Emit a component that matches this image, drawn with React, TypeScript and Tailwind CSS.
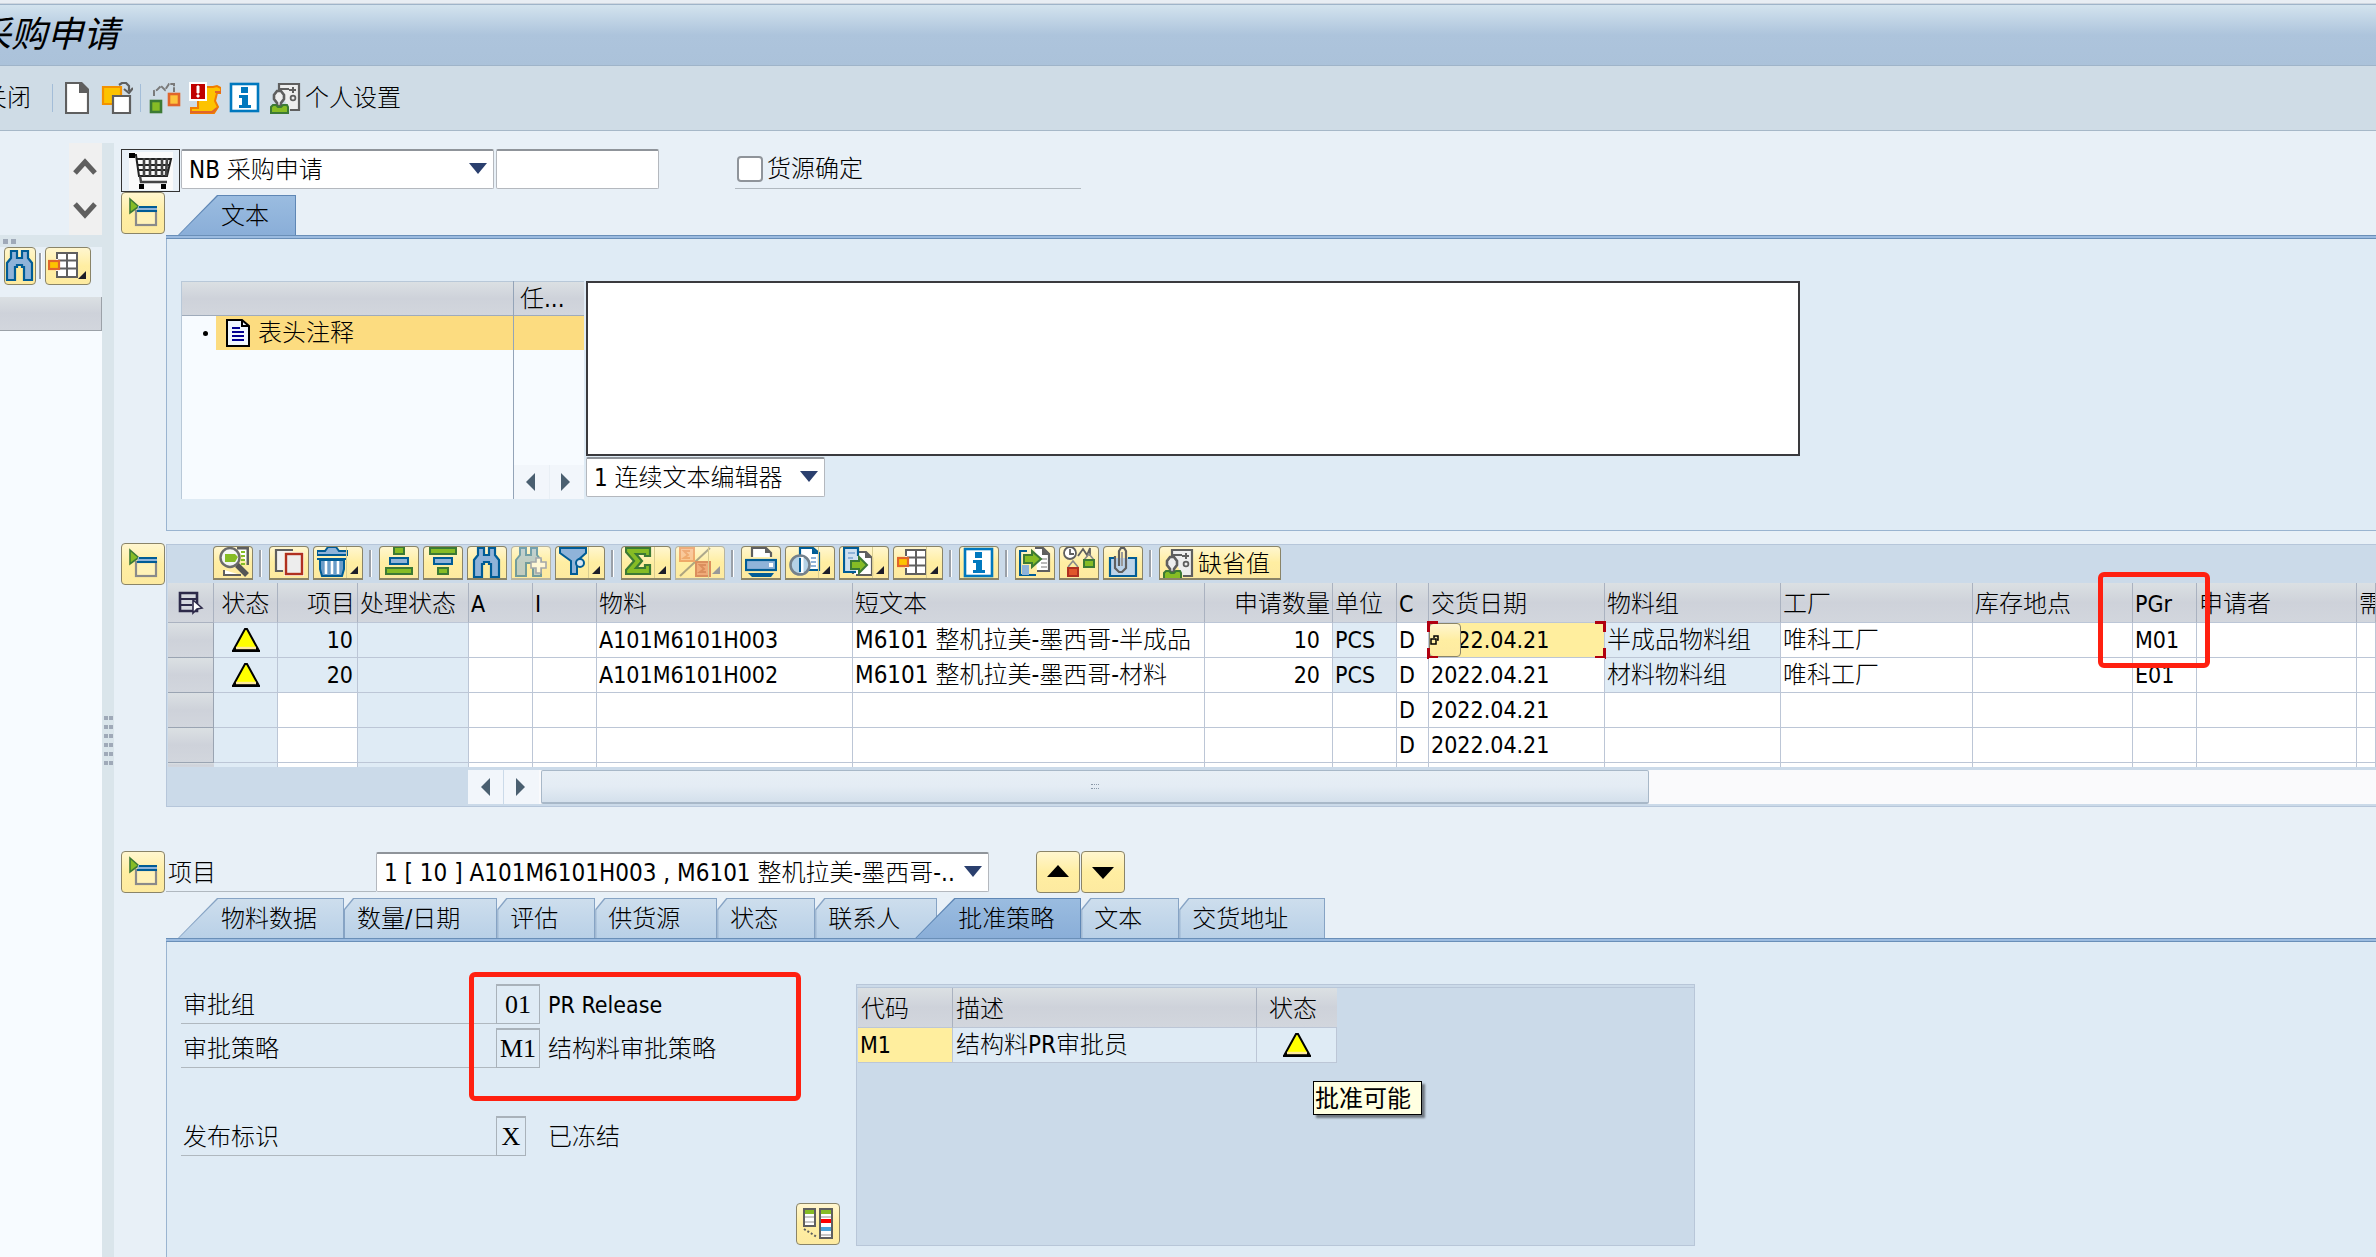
import type { ReactNode, SVGProps } from "react";
import clsx from "clsx";

const GRAY = "#5f5f5f";
const BLUE = "#005c96";
const SKY = "#8fb3d9";
const GREEN = "#86bc25";
const DARK_GREEN = "#3c7a34";

const Icon = ({ children, ...props }: SVGProps<SVGSVGElement>) => (
  <svg width="32" height="32" viewBox="0 0 32 32" fill="none" className="block shrink-0" aria-hidden="true" {...props}>
    {children}
  </svg>
);

const InfoIcon = () => (
  <Icon>
    <rect x="2" y="2" width="27" height="27" fill="#fff" stroke="#0078be" strokeWidth="2.6" />
    <path d="M12 5h7v6h-7zM10 13h9v10h3v3H10v-3h3v-7h-3z" fill="#0078be" />
  </Icon>
);

const PersonIcon = () => (
  <Icon>
    <path d="M10 8V2h20v26h-9" fill="#eee" stroke={GRAY} strokeWidth="2.2" />
    <path d="M11 7h9M20 8h7M24 5v6" stroke={GRAY} strokeWidth="2" />
    <circle cx="24" cy="16" r="2.4" stroke={GRAY} strokeWidth="1.8" />
    <path d="M8 9h4l3 4v4l-3 4v3H8v-3l-3-4v-4z" fill="#eee" stroke={GRAY} strokeWidth="2.6" />
    <path d="M2 31v-6l2-2h3l2 2h3l2-2h4l1 2v6z" fill={GREEN} stroke={DARK_GREEN} strokeWidth="2" />
  </Icon>
);

const BinocularsIcon = () => (
  <Icon>
    <path
      d="M7 1h6v7h5V1h6v7l4 5v17h-8V17h-2v-2h-5v2h-2v13H3V13l4-5z"
      fill={SKY}
      stroke={BLUE}
      strokeWidth="2.2"
    />
  </Icon>
);

const BinocularsPlusIcon = () => (
  <Icon opacity="0.55">
    <path d="M5 1h6v7h5V1h6v7l4 5v16h-8V16h-7v13H1V13l4-5z" fill={SKY} stroke={BLUE} strokeWidth="2" />
    <path d="M21 11h5v4h5v6h-5v5h-5v-5h-5v-6h5z" fill="#fff" stroke="#5a6fae" strokeWidth="1.6" />
  </Icon>
);

const LayoutIcon = () => (
  <Icon>
    <path d="M8 2h21v25H8z" fill="#fff" />
    <path d="M8 3h22M10 10.500h20M10 18.500h20M8 27h22M9 2v7M9 21v7M19 2v26M29 2v26" stroke={GRAY} strokeWidth="2" />
    <rect x="1" y="11" width="10" height="8" fill="#fdc300" stroke="#e0652b" strokeWidth="2.2" />
  </Icon>
);

const DetailIcon = () => (
  <Icon>
    <path d="M20 1h11v17" fill="#fff" stroke={GRAY} strokeWidth="3" />
    <path d="M24 5h4M24 9h4M24 13h4M24 17h4" stroke={GREEN} strokeWidth="2" />
    <path d="M7 23v5h17" stroke={GRAY} strokeWidth="2" fill="#fff" />
    <circle cx="13" cy="10.500" r="9.500" fill="#f4f6f4" stroke="#6b6b6b" strokeWidth="2.4" />
    <path d="M8 7h10l3 3-3 5H8z" fill={GREEN} />
    <path d="M20 18l10 10" stroke="#555" strokeWidth="5.500" />
  </Icon>
);

const CopyIcon = () => (
  <Icon>
    <path d="M20 3H3v21h7" fill="#f2f2f2" stroke={GRAY} strokeWidth="2.2" />
    <rect x="11" y="5" width="20" height="24" fill="#fff8e4" />
    <rect x="13" y="7" width="16" height="20" fill="#ededed" stroke="#b03020" strokeWidth="2.4" />
  </Icon>
);

const TrashIcon = () => (
  <Icon>
    <path d="M0 8V4h8l3-4h8l3 4h8v4z" fill={SKY} stroke={BLUE} strokeWidth="2" />
    <path d="M3 13h24v9l-2 7H5l-2-7z" fill="#6a9cc8" stroke={BLUE} strokeWidth="2" />
    <path d="M9 14v13M15 14v13M21 14v13" stroke="#fff" strokeWidth="2.600" />
    <path d="M0 12h30" stroke={BLUE} strokeWidth="2" />
  </Icon>
);

const SortAscIcon = () => (
  <Icon strokeWidth="2">
    <rect x="11" y="0" width="10" height="7" fill={GREEN} stroke={DARK_GREEN} />
    <rect x="7" y="11" width="18" height="6" fill={SKY} stroke={BLUE} />
    <rect x="3" y="21" width="26" height="6" fill={GREEN} stroke={DARK_GREEN} />
  </Icon>
);

const SortDescIcon = () => (
  <Icon strokeWidth="2">
    <rect x="3" y="1" width="26" height="6" fill={GREEN} stroke={DARK_GREEN} />
    <rect x="7" y="11" width="18" height="6" fill={SKY} stroke={BLUE} />
    <rect x="11" y="21" width="10" height="6" fill={GREEN} stroke={DARK_GREEN} />
  </Icon>
);

const FilterIcon = () => (
  <Icon>
    <path d="M1 1h26v5l-9 8v13h-6V14L1 6z" fill={SKY} stroke={BLUE} strokeWidth="2" />
    <circle cx="21" cy="16" r="4" fill="#d8e6f2" stroke={BLUE} strokeWidth="2" />
  </Icon>
);

const SumIcon = () => (
  <Icon>
    <path d="M1 1h24v8h-5V7h-9l6 7-6 7h9v-3h5v9H1v-4l8-9-8-9z" fill={GREEN} stroke={DARK_GREEN} strokeWidth="2.2" />
  </Icon>
);

const SubtotalIcon = () => (
  <Icon opacity="0.5">
    <path d="M1 29L31 1" stroke={GRAY} strokeWidth="2" />
    <rect x="1" y="1" width="14" height="13" fill="#f4a07a" stroke="#e0652b" strokeWidth="2" />
    <path d="M11 4H5l4 4-4 3h6" stroke="#e0652b" strokeWidth="2" />
    <rect x="17" y="15" width="14" height="14" fill="#e06a50" stroke="#b8321a" strokeWidth="2" />
    <path d="M27 18h-6l4 4-4 3h6" stroke="#b8321a" strokeWidth="2" />
  </Icon>
);

const PrintIcon = () => (
  <Icon>
    <path d="M7 10V1h14l5 5v4" fill="#fff" stroke={GRAY} strokeWidth="2.2" />
    <path d="M20 1v5h6z" fill={GRAY} />
    <rect x="1" y="13" width="30" height="10" fill={SKY} stroke={BLUE} strokeWidth="2.2" />
    <rect x="24" y="16" width="4" height="4" fill="#fff" />
    <path d="M3 26h26l-3 4H7z" fill={BLUE} />
  </Icon>
);

const PreviewIcon = () => (
  <Icon>
    <path d="M11 8V1h13l6 5v17H18" fill="#fff" stroke={BLUE} strokeWidth="2.2" />
    <path d="M23 1v6h7z" fill={BLUE} />
    <path d="M22 11h5M22 15h5M22 19h5" stroke={SKY} strokeWidth="2" />
    <circle cx="11" cy="18" r="9.500" fill="#b5d2e6" stroke="#74818c" strokeWidth="2.6" />
    <path d="M13 10v16" stroke="#fff" strokeWidth="3" />
    <path d="M11 11v14" stroke={BLUE} strokeWidth="2" />
  </Icon>
);

const ExportIcon = () => (
  <Icon>
    <path d="M10 27V5h13l6 6v17H13" fill="#fff" stroke={GRAY} strokeWidth="2.2" />
    <path d="M22 5v6h7z" fill={GRAY} />
    <path d="M13 25H1V1h14v8" fill="#cfe0f0" stroke={BLUE} strokeWidth="2.2" />
    <path d="M5 6h7M5 11h5" stroke={SKY} strokeWidth="2" />
    <path d="M8 14h8v-4l8 8-8 8v-4H8z" fill={GREEN} stroke={DARK_GREEN} strokeWidth="2" />
  </Icon>
);

const ImportIcon = () => (
  <Icon>
    <path d="M16 1h8l6 6v17H18" fill="#fff" stroke={GRAY} strokeWidth="2.2" />
    <path d="M23 1v7h7z" fill={GRAY} />
    <path d="M22 12h6M22 16h6M22 20h6" stroke="#b9b9b9" strokeWidth="2" />
    <path d="M8 4H1v24h16" stroke={BLUE} strokeWidth="2.2" />
    <path d="M3 18h7v10H3z" fill={SKY} />
    <path d="M5 8h8V4l9 8-9 8v-4H5z" fill={GREEN} stroke={DARK_GREEN} strokeWidth="2" />
  </Icon>
);

const ScheduleIcon = () => (
  <Icon>
    <circle cx="7" cy="6" r="6" fill="#fff" stroke={GRAY} strokeWidth="1.8" />
    <path d="M7 2v5h4M15 9l5-7 4 6 3-7v8" stroke={GRAY} strokeWidth="1.8" />
    <path d="M5 20l5-6 5 6M21 13l5-6 5 6" stroke="#8a8a8a" strokeWidth="1.6" />
    <rect x="21" y="13" width="10" height="7" fill={GREEN} stroke={DARK_GREEN} strokeWidth="2" />
    <rect x="5" y="21" width="10" height="8" fill="#e0562b" stroke="#b03020" strokeWidth="2" />
  </Icon>
);

const AttachmentIcon = () => (
  <Icon>
    <path d="M7 11H3v18h26V11h-8" fill="#bcd4ea" stroke={BLUE} strokeWidth="2.2" />
    <path d="M8 9v12l4 4h3l4-4V4l-2-3h-3l-2 3v15" stroke={GRAY} strokeWidth="2.2" />
    <path d="M15 5v14" stroke="#9a9a9a" strokeWidth="2" />
  </Icon>
);

const DocIcon = () => (
  <svg width="24" height="32" viewBox="0 0 24 32" className="block" aria-hidden="true">
    <path d="M1 1h14l8 8v22H1z" fill="#fff" stroke={GRAY} strokeWidth="2.200" />
    <path d="M14 0h3l7 7v4H14z" fill={GRAY} />
  </svg>
);

const OtherDocIcon = () => (
  <Icon>
    <path d="M2 5h18v17H2z" fill="#fdc300" stroke="#f39200" strokeWidth="2.200" />
    <path d="M18 3l3-2h4l3 3v5M23 7l5 4 4-5" stroke={GRAY} strokeWidth="2.200" />
    <path d="M12 14h17v17H12z" fill="#fff" stroke={GRAY} strokeWidth="2.200" />
  </Icon>
);

const HierarchyIcon = () => (
  <Icon>
    <path d="M5 14V9l3-1 4-4 4 4 4-6h5v8" stroke="#7a7a7a" strokeWidth="2" strokeDasharray="6 1" />
    <rect x="2" y="19" width="10" height="11" fill={GREEN} stroke={DARK_GREEN} strokeWidth="2.600" />
    <rect x="20" y="12" width="10" height="11" fill="#fdc33c" stroke="#e0652b" strokeWidth="2.600" />
  </Icon>
);

const MessagesIcon = () => (
  <Icon>
    <path
      d="M9 25V5h15l4-1 4 2v5h-4l-2 8 3 6-4 6H2v-5h7z"
      fill="#fdc300"
      stroke="#f07d00"
      strokeWidth="2"
    />
    <path d="M1 30h22l5-4M26 10h6" stroke="#e0652b" strokeWidth="2" />
    <path d="M0 0h18v19H0z" fill="#fff" />
    <path d="M2 2h14v15H2z" fill="#c00000" />
    <path d="M8 4h2v7H8zM8 13h2v2H8z" fill="#fff" stroke="#fff" />
  </Icon>
);

const CartIcon = () => (
  <svg width="46" height="38" viewBox="0 0 46 38" fill="none" aria-hidden="true">
    <path d="M1 0h44v38H1z" fill="#fafafa" />
    <path d="M1 3h7l3 21h28l4-17H9M9 13h33M10 18h31" stroke="#222" strokeWidth="2" />
    <path d="M16 6v18M22 6v18M28 6v18M34 6v18M39 6l-1 18" stroke="#444" strokeWidth="2.600" />
    <path d="M12 24l1 6h26" stroke="#444" strokeWidth="2.400" />
    <path d="M1 1h6v5H1zM11 32h5v5h-5zM33 32h5v5h-5z" fill="#000" />
  </svg>
);

const ExpandIcon = () => (
  <svg width="30" height="32" viewBox="0 0 30 32" fill="none" aria-hidden="true">
    <path d="M2 2l8 7v1l-8 6z" fill={GREEN} stroke={DARK_GREEN} strokeWidth="1.600" />
    <rect x="8" y="14" width="20" height="14" fill="#fff2b8" stroke="#8a8a8a" strokeWidth="2.200" />
    <path d="M10 9h19v6H9z" fill={SKY} />
    <path d="M11 10h18M9 14h20" stroke={BLUE} strokeWidth="2" />
  </svg>
);

const TextDocIcon = () => (
  <svg width="24" height="28" viewBox="0 0 24 28" fill="none" aria-hidden="true">
    <path d="M1 1h15l7 6v20H1z" fill="#f0f8ff" stroke="#000" strokeWidth="2" />
    <path d="M16 1v6h7" stroke="#000" strokeWidth="2" />
    <path d="M6 9h8M6 13h12M6 17h12M6 21h12" stroke="#000090" strokeWidth="2" />
  </svg>
);

const WarnTriangle = () => (
  <svg width="28" height="24" viewBox="0 0 28 24" className="mx-auto block" role="img" aria-label="批准可能">
    <path d="M13 1h2l11 20H2z" fill="#ff0" stroke="#000" strokeWidth="2" />
    <path d="M4 20h20" stroke="#ffe9a0" strokeWidth="2.400" />
    <path d="M0 23h28" stroke="#000" strokeWidth="2" />
  </svg>
);

const SelectAllIcon = () => (
  <svg width="26" height="24" viewBox="0 0 26 24" fill="none" className="mx-auto block" aria-hidden="true">
    <path d="M2 2h17v18H2z" fill="#d5d8df" stroke="#2d2a4a" strokeWidth="2.600" />
    <path d="M2 8h17M2 14h12" stroke="#2d2a4a" strokeWidth="2.200" />
    <path d="M15 9l9 8-5 1-4 4z" fill="#fff" stroke="#2d2a4a" strokeWidth="1.600" />
  </svg>
);

const CompareIcon = () => (
  <Icon>
    <rect x="2" y="1" width="11" height="17" fill="#fff" stroke={GRAY} strokeWidth="2" />
    <path d="M3 4h9" stroke={GREEN} strokeWidth="4" />
    <path d="M3 9h9M3 14h9" stroke="#c8c8c8" strokeWidth="2" />
    <rect x="18" y="1" width="12" height="29" fill="#fff" stroke={GRAY} strokeWidth="2" />
    <path d="M19 4h10" stroke={GREEN} strokeWidth="4" />
    <path d="M19 9h10M19 27h10" stroke="#c8c8c8" strokeWidth="2" />
    <path d="M19 13h10" stroke="#f00" strokeWidth="4" />
    <path d="M19 21h10" stroke="#4aa3d8" strokeWidth="4" />
    <path d="M2 21l13 8" stroke={GRAY} strokeWidth="2" strokeDasharray="2 2" />
  </Icon>
);

const Arrow = ({ dir, className = "" }: { dir: "left" | "right" | "up" | "down"; className?: string }) => {
  const d = { left: "M15 1v18l-9-9z", right: "M5 1v18l9-9z", up: "M11 3l11 12H0z", down: "M11 17L0 5h22z" }[dir];
  return (
    <svg width="22" height="20" viewBox="0 0 22 20" fill="currentColor" className={className} aria-hidden="true">
      <path d={d} />
    </svg>
  );
};

const yellow = "border border-[#8a8468] bg-linear-to-b from-[#fff6cf] via-[#ffeea2] to-[#fdeaa0]";

const ToolButton = ({
  label,
  menu,
  faded,
  children,
}: {
  label: string;
  menu?: boolean;
  faded?: boolean;
  children: ReactNode;
}) => (
  <button
    type="button"
    aria-label={label}
    className={clsx(
      "relative flex h-[34px] shrink-0 items-start overflow-hidden rounded-t-sm border-b-2 pl-[3px]",
      yellow,
      menu ? "w-[50px]" : "w-10",
      faded && "border-[#b8b5a0]"
    )}
  >
    {children}
    {menu && (
      <>
        <span className="absolute inset-y-0 left-8 w-px bg-[#d8cc90]" />
        <svg width="8" height="8" viewBox="0 0 8 8" className="absolute right-1 bottom-1" aria-hidden="true">
          <path d="M8 0v8H0z" fill={faded ? "#999" : "#1c1c28"} />
        </svg>
      </>
    )}
  </button>
);

const Divider = () => (
  <span className="flex h-[34px] w-2 shrink-0 items-center pl-0.5">
    <span className="h-[27px] w-[3px] border-l-2 border-[#9aa0a8] bg-white" />
  </span>
);

const ExpandButton = ({ label }: { label: string }) => (
  <button
    type="button"
    aria-label={label}
    className={clsx("flex h-[42px] w-11 shrink-0 items-center justify-center rounded-sm", yellow)}
  >
    <ExpandIcon />
  </button>
);

const Dropdown = ({ label, value, className }: { label: string; value: string; className: string }) => (
  <span className={clsx("relative block h-10", className)}>
    <select
      aria-label={label}
      className="h-full w-full appearance-none rounded-xs border border-t-2 border-[#b4b8be] border-t-[#8f949a] bg-white pr-7 pl-[7px] text-2xl"
    >
      <option>{value}</option>
    </select>
    <svg
      width="18"
      height="12"
      viewBox="0 0 18 12"
      fill="#2a3f6e"
      className="pointer-events-none absolute top-[14px] right-[7px]"
      aria-hidden="true"
    >
      <path d="M0 0h18l-9 11z" />
    </svg>
  </span>
);

const Tab = ({ label, active, wide }: { label: string; active?: boolean; wide?: boolean }) => {
  const clip = wide
    ? "[clip-path:polygon(39px_0,100%_0,100%_100%,0_100%)]"
    : "[clip-path:polygon(0_11px,9px_0,100%_0,100%_100%,0_100%)]";
  return (
    <button
      type="button"
      role="tab"
      aria-selected={!!active}
      className={clsx("h-10 shrink-0 p-px pb-0", clip, active ? "relative bg-[#5f87b5]" : "bg-[#86a3c4]")}
    >
      <span
        className={clsx(
          "flex h-full items-center whitespace-nowrap bg-linear-to-b",
          clip,
          wide ? "pr-[26px] pl-[42px]" : "pr-[36px] pl-3",
          active ? "from-[#9abce0] to-[#8aaed8]" : "from-[#cddeed] to-[#b9d0e7]"
        )}
      >
        {label}
      </span>
    </button>
  );
};

const TabBar = () => <div className="h-1 border-y border-[#6a8fb8] bg-[#9bbbe0]" />;

const latin = "text-[23px]";
const columns = [46, 64, 80, 111, 64, 64, 256, 352, 128, 64, 32, 176, 176, 192, 160, 64, 160];
const headers = ["状态", "项目", "处理状态", "A", "I", "物料", "短文本", "申请数量", "单位", "C", "交货日期", "物料组", "工厂", "库存地点", "PGr", "申请者", "需"];

const items = [
  { item: "10", material: "A101M6101H003", text: "M6101 整机拉美-墨西哥-半成品", qty: "10", unit: "PCS", group: "半成品物料组", plant: "唯科工厂", pgr: "M01", focus: true },
  { item: "20", material: "A101M6101H002", text: "M6101 整机拉美-墨西哥-材料", qty: "20", unit: "PCS", group: "材料物料组", plant: "唯科工厂", pgr: "E01" },
  {},
  {},
] as {
  item?: string;
  material?: string;
  text?: string;
  qty?: string;
  unit?: string;
  group?: string;
  plant?: string;
  pgr?: string;
  focus?: boolean;
}[];

const headerFill = "bg-linear-to-b from-[#dbe0e3] via-[#ced2da] to-[#d2d6dd] bg-[#ced2da]";

const Cell = ({ children, locked, className }: { children?: ReactNode; locked?: boolean; className?: string }) => (
  <td
    className={clsx(
      "overflow-hidden border-r border-b border-[#bcc6d6] px-0.5 whitespace-nowrap",
      locked ? "bg-[#dfebf5]" : "bg-white",
      className
    )}
  >
    {children}
  </td>
);

const corners = [
  "top-[-2px] left-[-2px] border-t-3 border-l-3",
  "top-[-2px] right-[-2px] border-t-3 border-r-3",
  "bottom-[-2px] left-[-2px] border-b-3 border-l-3",
  "bottom-[-2px] right-[-2px] border-b-3 border-r-3",
];

const ItemGrid = () => (
  <table className="w-full table-fixed border-separate border-spacing-0 text-left leading-[30px]">
    <colgroup>
      {columns.map((w, i) => (
        <col key={i} style={{ width: w }} />
      ))}
      <col />
    </colgroup>
    <thead>
      <tr className="h-10">
        <th className={clsx("border-r border-b border-[#aab2c0]", headerFill)}>
          <SelectAllIcon />
        </th>
        {headers.map((h) => (
          <th
            key={h}
            className={clsx(
              "border-r border-b border-[#aab2c0] border-b-[#bcc6d6] px-0.5 pt-0.5 font-light whitespace-nowrap",
              headerFill,
              /^[A-Z]/.test(h) && latin,
              (h === "项目" || h === "申请数量") && "text-right",
              h === "状态" && "text-center",
              h === "需" && "overflow-hidden",
              h === "PGr" && "relative z-10"
            )}
          >
            {h}
            {h === "PGr" && (
              <span className="absolute top-[-11px] left-[-35px] h-24 w-28 rounded-md border-[5px] border-[#ff2010]" />
            )}
          </th>
        ))}
      </tr>
    </thead>
    <tbody>
      {items.map((r, i) => (
        <tr key={i} className="h-[35px]">
          <td className={clsx("border-r border-b border-[#9aa4b2]", headerFill)} />
          <Cell locked>{r.item && <WarnTriangle />}</Cell>
          <Cell locked={!!r.item} className={clsx("pr-1 text-right", latin)}>
            {r.item}
          </Cell>
          <Cell locked />
          <Cell />
          <Cell />
          <Cell className={latin}>{r.material}</Cell>
          <Cell>{r.text}</Cell>
          <Cell className={clsx("pr-3 text-right", latin)}>{r.qty}</Cell>
          <Cell locked={!!r.unit} className={latin}>
            {r.unit}
          </Cell>
          <Cell className={latin}>D</Cell>
          <td
            className={clsx(
              "relative border-r border-b border-[#bcc6d6] px-0.5 whitespace-nowrap",
              latin,
              r.focus ? "bg-[#ffee9e]" : "bg-white"
            )}
          >
            2022.04.21
            {r.focus && (
              <>
                <button
                  type="button"
                  aria-label="搜索帮助"
                  className={clsx("absolute inset-y-0 left-0 w-8 rounded-sm", yellow)}
                >
                  <svg width="10" height="10" viewBox="0 0 10 10" fill="none" aria-hidden="true">
                    <path d="M1 4h5v5H1zM4 3V1h4v4H7" stroke="#000" strokeWidth="1.500" />
                  </svg>
                </button>
                {corners.map((c) => (
                  <span key={c} className={clsx("absolute size-[11px] border-[#b00010]", c)} />
                ))}
              </>
            )}
          </td>
          <Cell locked={!!r.group}>{r.group}</Cell>
          <Cell>{r.plant}</Cell>
          <Cell />
          <Cell className={latin}>{r.pgr}</Cell>
          <Cell />
          <Cell />
        </tr>
      ))}
      <tr className="h-1">
        <td className={headerFill} />
        {headers.map((h) => (
          <td
            key={h}
            className={clsx("border-r border-[#bcc6d6]", h === "状态" || h === "处理状态" ? "bg-[#dfebf5]" : "bg-white")}
          />
        ))}
      </tr>
    </tbody>
  </table>
);

const LeftPane = () => (
  <aside className="flex w-[102px] shrink-0 flex-col pt-3">
    <div className="flex h-[92px] justify-end">
      <div className="flex w-[33px] flex-col items-center justify-between bg-[#f0f0f0] pt-[15px] pr-0.5 pb-4 text-[#5f5f5f]">
        <svg width="24" height="18" viewBox="0 0 24 18" fill="none" stroke="currentColor" strokeWidth="5" aria-hidden="true">
          <path d="M2 15L12 4l10 11" />
        </svg>
        <svg width="24" height="18" viewBox="0 0 24 18" fill="none" stroke="currentColor" strokeWidth="5" aria-hidden="true">
          <path d="M2 3l10 11L22 3" />
        </svg>
      </div>
    </div>
    <div className="flex h-3 items-center gap-[3px] bg-[#dae5eb] pl-[3px]">
      <span className="size-[5px] bg-[#9fa9b8]" />
      <span className="size-[5px] bg-[#9fa9b8]" />
    </div>
    <div className="flex h-[50px] items-start gap-[3px] pl-1">
      <button type="button" aria-label="查找" className={clsx("flex h-[38px] w-8 items-center justify-center rounded-sm", yellow)}>
        <BinocularsIcon />
      </button>
      <span className="mt-1.5 h-[26px] w-[3px] border-l-2 border-[#9aa0a8] bg-white" />
      <button
        type="button"
        aria-label="布局"
        className={clsx("relative flex h-[38px] w-[46px] items-center rounded-sm pl-0.5", yellow)}
      >
        <LayoutIcon />
        <svg width="8" height="8" viewBox="0 0 8 8" className="absolute right-1 bottom-[5px]" aria-hidden="true">
          <path d="M8 0v8H0z" fill="#1c1c28" />
        </svg>
      </button>
    </div>
    <div className={clsx("h-[34px] border-r border-b border-[#9ba1a8]", headerFill)} />
    <div className="flex-1 bg-[#f7fbff]" />
  </aside>
);

const scrollButton = "flex h-[34px] w-[35px] items-center justify-center bg-[#f2f6fb] text-[#4a5f70]";

const HeaderTexts = () => (
  <section className="flex">
    <ExpandButton label="抬头" />
    <div className="ml-px min-w-0 flex-1">
      <div role="tablist" className="flex pt-[3px] pl-3">
        <Tab label="文本" wide active />
      </div>
      <TabBar />
      <div className="flex border-b border-l border-[#9ab4d0] bg-[#dfebf5] pt-[42px] pb-[31px] pl-3.5">
        <div className="flex h-[218px] border-l border-[#b8c8d8] bg-[#f7fbff]">
          <div className="flex w-[331px] flex-col">
            <div className={clsx("h-[35px] border-t border-b border-[#9fabbb] border-t-[#b8c8d8]", headerFill)} />
            <div className="flex h-[34px]">
              <span className="flex w-[34px] items-center justify-end pr-2">
                <span className="size-[5px] rounded-full bg-black" />
              </span>
              <span className="flex flex-1 items-center gap-2 bg-[#fcdc80] pl-2.5">
                <TextDocIcon />
                表头注释
              </span>
            </div>
          </div>
          <div className="flex w-[71px] flex-col border-l border-[#94a4b8]">
            <div
              className={clsx(
                "flex h-[35px] items-center border-t border-b border-[#9fabbb] border-t-[#b8c8d8] pl-1.5",
                headerFill
              )}
            >
              任...
            </div>
            <div className="h-[34px] bg-[#fcdc80]" />
            <div className="mt-auto flex justify-end gap-px bg-[#e9eff5]">
              <button type="button" aria-label="向左" className={scrollButton}>
                <Arrow dir="left" />
              </button>
              <button type="button" aria-label="向右" className={scrollButton}>
                <Arrow dir="right" />
              </button>
            </div>
          </div>
        </div>
        <div className="ml-0.5">
          <textarea
            aria-label="表头注释"
            className="block h-[175px] w-[1214px] resize-none border-2 border-[#3a3a3e] bg-white p-1"
          />
          <Dropdown label="文本编辑器" value="1 连续文本编辑器" className="mt-px w-[239px]" />
        </div>
      </div>
    </div>
  </section>
);

const GridSection = () => (
  <section className="mt-3 flex">
    <ExpandButton label="项目概览" />
    <div className="mt-px ml-px min-w-0 flex-1 border-y border-l border-[#b6c6da] bg-[#cbdae9] pl-px">
      <div className="flex gap-1 pt-px pb-[3px] pl-[45px]">
        <ToolButton label="明细"><DetailIcon /></ToolButton>
        <Divider />
        <ToolButton label="复制"><CopyIcon /></ToolButton>
        <ToolButton label="删除" menu><TrashIcon /></ToolButton>
        <Divider />
        <ToolButton label="升序排序"><SortAscIcon /></ToolButton>
        <ToolButton label="降序排序"><SortDescIcon /></ToolButton>
        <ToolButton label="查找"><BinocularsIcon /></ToolButton>
        <ToolButton label="继续查找" faded><BinocularsPlusIcon /></ToolButton>
        <ToolButton label="过滤" menu><FilterIcon /></ToolButton>
        <Divider />
        <ToolButton label="总计" menu><SumIcon /></ToolButton>
        <ToolButton label="小计" menu faded><SubtotalIcon /></ToolButton>
        <Divider />
        <ToolButton label="打印"><PrintIcon /></ToolButton>
        <ToolButton label="视图" menu><PreviewIcon /></ToolButton>
        <ToolButton label="导出" menu><ExportIcon /></ToolButton>
        <ToolButton label="布局" menu><LayoutIcon /></ToolButton>
        <Divider />
        <ToolButton label="信息"><InfoIcon /></ToolButton>
        <Divider />
        <ToolButton label="导入"><ImportIcon /></ToolButton>
        <ToolButton label="计划"><ScheduleIcon /></ToolButton>
        <ToolButton label="附件"><AttachmentIcon /></ToolButton>
        <Divider />
        <button
          type="button"
          className={clsx("flex h-[34px] items-center gap-1 overflow-hidden rounded-t-sm border-b-2 pt-0.5 pr-2.5 pl-0.5", yellow)}
        >
          <PersonIcon />
          缺省值
        </button>
      </div>
      <ItemGrid />
      <div className="flex pt-[3px] pb-0.5 pl-[300px]">
        <button type="button" aria-label="向左" className={scrollButton}>
          <Arrow dir="left" />
        </button>
        <button type="button" aria-label="向右" className={clsx(scrollButton, "ml-px")}>
          <Arrow dir="right" />
        </button>
        <div className="flex flex-1 bg-[#fafafc] pl-0.5">
          <div className="grid w-[1108px] place-items-center rounded-xs border border-b-2 border-[#a8b8c8] bg-linear-to-b from-[#e8eff6] via-[#e4ecf4] to-[#d4e0ec]">
            <span className="h-[5px] w-2 border-y border-dotted border-[#8a98a8]" />
          </div>
        </div>
      </div>
    </div>
  </section>
);

const FormRow = ({
  id,
  label,
  value,
  text,
  narrow,
}: {
  id: string;
  label: string;
  value: string;
  text: string;
  narrow?: boolean;
}) => (
  <div className="flex h-10 items-center">
    <label htmlFor={id} className="flex h-full w-[315px] items-center border-b border-[#b0b8bf] pt-0.5 pl-0.5">
      {label}
    </label>
    <input
      id={id}
      readOnly
      defaultValue={value}
      className={clsx(
        "h-full border border-t-2 border-[#a9b2ba] bg-[#dfebf5] text-center font-['Liberation_Serif',serif] text-[26px]",
        narrow ? "mr-[22px] w-[30px]" : "mr-2 w-11"
      )}
    />
    <span className={clsx("pt-0.5", /^[A-Z]/.test(text) && latin)}>{text}</span>
  </div>
);

const ReleaseStrategy = () => (
  <div className="flex flex-1 items-start border-l border-[#9ab4d0] bg-[#dfebf5] pt-[42px] pb-2 pl-3.5">
    <div className="relative flex w-[615px] shrink-0 flex-col gap-1">
      <FormRow id="group" label="审批组" value="01" text="PR Release" />
      <FormRow id="strategy" label="审批策略" value="M1" text="结构料审批策略" />
      <div className="h-10" />
      <FormRow id="indicator" label="发布标识" value="X" text="已冻结" narrow />
      <span className="pointer-events-none absolute top-[-12px] left-72 h-[129px] w-[332px] rounded-md border-[5px] border-[#ff2010]" />
    </div>
    <button
      type="button"
      aria-label="审批明细"
      className={clsx("mt-[219px] flex h-[42px] w-11 shrink-0 items-center justify-center rounded-sm", yellow)}
    >
      <CompareIcon />
    </button>
    <div className="ml-4 h-[262px] w-[839px] border border-[#b8c6d8] bg-[#cbdae9] pt-0.5">
      <div className="border-t border-[#b8c6d8] pl-px">
        <table className="table-fixed border-separate border-spacing-0 text-left leading-[30px]">
          <colgroup>
            <col className="w-[95px]" />
            <col className="w-[304px]" />
            <col className="w-20" />
          </colgroup>
          <thead>
            <tr className="h-10">
              {["代码", "描述", "状态"].map((h) => (
                <th
                  key={h}
                  className={clsx(
                    "border-r border-b border-[#aab2c0] border-b-[#bcc6d6] px-[3px] pt-0.5 font-light last:border-r-0 last:pl-3",
                    headerFill
                  )}
                >
                  {h}
                </th>
              ))}
            </tr>
          </thead>
          <tbody>
            <tr className="h-[35px]">
              <Cell className={clsx("bg-[#ffee9e]!", latin)}>M1</Cell>
              <Cell locked className="pl-[3px]">结构料PR审批员</Cell>
              <td className="relative border-r border-b border-[#bcc6d6] bg-[#dfebf5]">
                <WarnTriangle />
                <span
                  role="tooltip"
                  className="absolute top-[53px] left-14 w-[109px] border border-black bg-[#ffffe1] pt-0.5 pl-px font-normal whitespace-nowrap shadow-[3px_3px_2px_rgba(0,0,0,0.45)]"
                >
                  批准可能
                </span>
              </td>
            </tr>
          </tbody>
        </table>
      </div>
    </div>
  </div>
);

const ItemDetail = () => (
  <section className="mt-11 flex flex-1 flex-col">
    <div className="flex items-center">
      <ExpandButton label="项目明细" />
      <span className="ml-px flex h-10 w-[210px] items-center border-b border-[#b0b8bf] pt-0.5 pl-0.5">项目</span>
      <Dropdown
        label="项目"
        value="1 [ 10 ] A101M6101H003 , M6101 整机拉美-墨西哥-.."
        className="w-[613px]"
      />
      <div className="ml-[47px] flex gap-px">
        <button type="button" aria-label="上一项" className={clsx("flex h-[42px] w-11 items-center justify-center rounded-sm", yellow)}>
          <Arrow dir="up" />
        </button>
        <button type="button" aria-label="下一项" className={clsx("flex h-[42px] w-11 items-center justify-center rounded-sm", yellow)}>
          <Arrow dir="down" />
        </button>
      </div>
    </div>
    <div className="mt-[5px] ml-[45px] flex flex-1 flex-col">
      <div role="tablist" className="flex pl-3">
        <Tab label="物料数据" wide />
        <Tab label="数量/日期" />
        <Tab label="评估" />
        <Tab label="供货源" />
        <Tab label="状态" />
        <Tab label="联系人" />
        <div className="-ml-[22px] flex">
          <Tab label="批准策略" wide active />
        </div>
        <Tab label="文本" />
        <Tab label="交货地址" />
      </div>
      <TabBar />
      <ReleaseStrategy />
    </div>
  </section>
);

export default function App() {
  return (
    <div className="flex min-h-screen flex-col overflow-hidden bg-[#e8f0f7] font-['DejaVu_Sans_Condensed','Noto_Sans_CJK_SC',sans-serif] text-2xl leading-[30px] font-light text-black">
      <header>
        <div className="h-1 border-b border-[#cfd6df] bg-[#e8edf3]" />
        <div className="flex h-[62px] items-center overflow-hidden border-y border-[#9fb4c9] bg-linear-to-b from-[#d3e3ee] via-[#adc4dc] via-50% to-[#abc2da]">
          <h1 className="flex w-[119px] justify-end text-4xl font-normal whitespace-nowrap italic">采购申请</h1>
        </div>
        <div className="flex h-[65px] items-center overflow-hidden border-b border-[#a6b8c8] bg-[#cfdce6]">
          <button type="button" className="flex w-[31px] justify-end whitespace-nowrap">关闭</button>
          <span className="ml-[21px] h-7 w-px bg-[#a3bdd8]" />
          <button type="button" aria-label="新建" className="ml-3"><DocIcon /></button>
          <button type="button" aria-label="其他凭证" className="ml-3"><OtherDocIcon /></button>
          <span className="ml-[7px] h-7 w-px bg-[#a3bdd8]" />
          <button type="button" aria-label="层次" className="ml-2"><HierarchyIcon /></button>
          <button type="button" aria-label="消息" className="ml-2"><MessagesIcon /></button>
          <button type="button" aria-label="帮助" className="ml-2"><InfoIcon /></button>
          <button type="button" className="ml-2 flex items-center gap-1">
            <PersonIcon />
            个人设置
          </button>
        </div>
      </header>
      <div className="flex flex-1">
        <LeftPane />
        <div className="mt-3 flex w-3 shrink-0 items-center justify-center bg-[#dae5eb]">
          <div className="mb-[-80px] grid grid-cols-2 gap-x-px gap-y-[5px]">
            {Array.from({ length: 12 }, (_, i) => (
              <span key={i} className="size-1 bg-[#9fa9b8]" />
            ))}
          </div>
        </div>
        <main className="flex min-w-0 flex-1 flex-col pt-[18px] pl-[7px]">
          <div className="flex h-[43px] items-start">
            <button type="button" aria-label="购物车" className="flex h-[43px] w-[59px] items-center justify-center border border-[#333]">
              <CartIcon />
            </button>
            <Dropdown label="凭证类型" value="NB 采购申请" className="ml-px w-[313px]" />
            <input
              aria-label="采购申请号"
              className="ml-0.5 h-10 w-[163px] rounded-xs border border-t-2 border-[#b4b8be] border-t-[#8f949a] bg-white px-2"
            />
            <label className="ml-[76px] flex h-10 w-[346px] items-center gap-1 border-b border-[#b0b8bf] pl-0.5">
              <input type="checkbox" className="size-[26px] appearance-none rounded border-2 border-[#8f949a] bg-white" />
              货源确定
            </label>
          </div>
          <HeaderTexts />
          <GridSection />
          <ItemDetail />
        </main>
      </div>
    </div>
  );
}
